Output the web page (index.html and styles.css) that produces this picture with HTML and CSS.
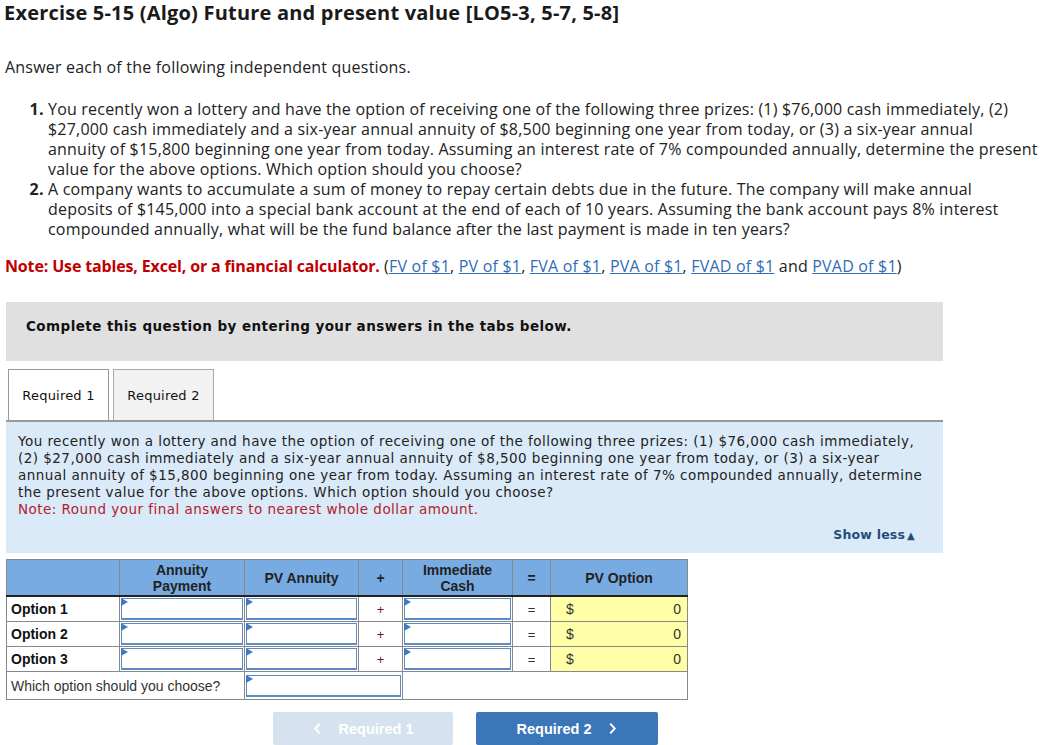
FILE: index.html
```html
<!DOCTYPE html>
<html>
<head>
<meta charset="utf-8">
<link rel="stylesheet" href="styles.css">
</head>
<body>
<h1 class="title">Exercise 5-15 (Algo) Future and present value [LO5-3, 5-7, 5-8]</h1>
<p class="intro">Answer each of the following independent questions.</p>
<ol class="questions">
  <li>You recently won a lottery and have the option of receiving one of the following three prizes: (1) $76,000 cash immediately, (2)<br>$27,000 cash immediately and a six-year annual annuity of $8,500 beginning one year from today, or (3) a six-year annual<br>annuity of $15,800 beginning one year from today. Assuming an interest rate of 7% compounded annually, determine the present<br>value for the above options. Which option should you choose?</li>
  <li>A company wants to accumulate a sum of money to repay certain debts due in the future. The company will make annual<br>deposits of $145,000 into a special bank account at the end of each of 10 years. Assuming the bank account pays 8% interest<br>compounded annually, what will be the fund balance after the last payment is made in ten years?</li>
</ol>
<p class="note"><span class="note-red">Note: Use tables, Excel, or a financial calculator.</span> (<a>FV of $1</a>, <a>PV of $1</a>, <a>FVA of $1</a>, <a>PVA of $1</a>, <a>FVAD of $1</a> and <a>PVAD of $1</a>)</p>

<div class="banner">Complete this question by entering your answers in the tabs below.</div>

<div class="tabs">
  <div class="tab active">Required 1</div>
  <div class="tab">Required 2</div>
</div>
<div class="tab-panel">
  <p class="panel-text">You recently won a lottery and have the option of receiving one of the following three prizes: (1) $76,000 cash immediately, (2) $27,000 cash immediately and a six-year annual annuity of $8,500 beginning one year from today, or (3) a six-year annual annuity of $15,800 beginning one year from today. Assuming an interest rate of 7% compounded annually, determine the present value for the above options. Which option should you choose?</p>
  <p class="panel-note">Note: Round your final answers to nearest whole dollar amount.</p>
  <div class="show-less">Show less<span class="tri">&#9650;</span></div>
</div>

<table class="answers">
  <colgroup>
    <col class="c-label"><col class="c-ap"><col class="c-pva"><col class="c-plus"><col class="c-cash"><col class="c-eq"><col class="c-pvo">
  </colgroup>
  <thead>
    <tr>
      <th></th>
      <th>Annuity<br>Payment</th>
      <th>PV Annuity</th>
      <th>+</th>
      <th>Immediate<br>Cash</th>
      <th>=</th>
      <th>PV Option</th>
    </tr>
  </thead>
  <tbody>
    <tr>
      <td class="label">Option 1</td>
      <td class="inp"><div class="box"></div></td>
      <td class="inp"><div class="box"></div></td>
      <td class="sym plus">+</td>
      <td class="inp"><div class="box"></div></td>
      <td class="sym">=</td>
      <td class="pvo"><span>$</span><span>0</span></td>
    </tr>
    <tr>
      <td class="label">Option 2</td>
      <td class="inp"><div class="box"></div></td>
      <td class="inp"><div class="box"></div></td>
      <td class="sym plus">+</td>
      <td class="inp"><div class="box"></div></td>
      <td class="sym">=</td>
      <td class="pvo"><span>$</span><span>0</span></td>
    </tr>
    <tr>
      <td class="label">Option 3</td>
      <td class="inp"><div class="box"></div></td>
      <td class="inp"><div class="box"></div></td>
      <td class="sym plus">+</td>
      <td class="inp"><div class="box"></div></td>
      <td class="sym">=</td>
      <td class="pvo"><span>$</span><span>0</span></td>
    </tr>
    <tr class="last">
      <td class="which" colspan="2">Which option should you choose?</td>
      <td class="inp" colspan="2"><div class="box"></div></td>
      <td colspan="3"></td>
    </tr>
  </tbody>
</table>

<div class="nav">
  <div class="btn prev"><svg class="chev" viewBox="0 0 10 14" width="9" height="13"><path d="M7.5 1.5 L2.5 7 L7.5 12.5" fill="none" stroke="currentColor" stroke-width="2.2"/></svg>Required 1</div>
  <div class="btn next">Required 2<svg class="chev" viewBox="0 0 10 14" width="9" height="13"><path d="M2.5 1.5 L7.5 7 L2.5 12.5" fill="none" stroke="currentColor" stroke-width="2.2"/></svg></div>
</div>
</body>
</html>
```

FILE: styles.css
```css
body {
  margin: 0;
  padding: 0 4px;
  font-family: "Open Sans", "Liberation Sans", sans-serif;
  color: #222;
  width: 1045px;
}
.title {
  margin: 0;
  padding-top: 1px;
  font-size: 20px;
  font-weight: 700;
  line-height: 24px;
  letter-spacing: 0.2px;
  color: #1a1a1a;
}
.intro {
  margin: 32px 0 0 1px;
  font-size: 16px;
  line-height: 20px;
  letter-spacing: 0.2px;
}
.questions {
  margin: 22px 0 0 0;
  padding-left: 44px;
  font-size: 16px;
  line-height: 20px;
  letter-spacing: 0.2px;
  white-space: nowrap;
}
.questions li::marker {
  font-weight: 700;
}
.note {
  margin: 17px 0 0 1px;
  font-size: 16px;
  line-height: 20px;
  letter-spacing: 0.2px;
}
.note-red {
  color: #c00000;
  font-weight: 700;
  letter-spacing: -0.15px;
}
.note a {
  color: #2f6db5;
  text-decoration: underline;
}
.banner {
  margin: 26px 0 0 2px;
  width: 937px;
  height: 59px;
  box-sizing: border-box;
  padding: 16px 0 0 20px;
  background: #e0e0e0;
  font-family: "DejaVu Sans", Verdana, sans-serif;
  font-weight: 700;
  font-size: 13.5px;
  color: #111;
  letter-spacing: 0.43px;
}
.tabs {
  display: flex;
  gap: 4px;
  margin: 8px 0 0 4px;
}
.tab {
  width: 101px;
  height: 51px;
  box-sizing: border-box;
  border: 1px solid #aaa;
  border-bottom: none;
  background: #f2f2f2;
  font-family: "DejaVu Sans", Verdana, sans-serif;
  font-size: 13px;
  letter-spacing: 0.2px;
  display: flex;
  align-items: center;
  justify-content: center;
  color: #111;
}
.tab.active {
  background: #fff;
  border-color: #999;
}
.tab-panel {
  margin-left: 2px;
  width: 937px;
  height: 133px;
  box-sizing: border-box;
  border-top: 2px solid #999;
  background: #dbeaf8;
  padding: 11px 16px 0 12px;
  font-family: "DejaVu Sans", Verdana, sans-serif;
  font-size: 13.5px;
  line-height: 17px;
  letter-spacing: 0.46px;
  position: relative;
}
.panel-text {
  margin: 0;
  color: #222;
}
.panel-note {
  margin: 0;
  color: #b0222a;
}
.show-less {
  position: absolute;
  right: 28px;
  bottom: 9px;
  font-weight: 700;
  font-size: 12.5px;
  letter-spacing: 0.2px;
  color: #1f4e79;
}
.tri {
  font-size: 10px;
  margin-left: 2px;
}
.answers {
  margin: 6px 0 0 2px;
  border-collapse: collapse;
  font-family: "Liberation Sans", Arial, sans-serif;
  font-size: 14px;
  table-layout: fixed;
  width: 681px;
}
.c-label { width: 113px; }
.c-ap { width: 125px; }
.c-pva { width: 114px; }
.c-plus { width: 44px; }
.c-cash { width: 110px; }
.c-eq { width: 38px; }
.c-pvo { width: 137px; }
.answers th {
  background: #77abe2;
  border: 1px solid #888;
  border-bottom: 2px solid #222;
  height: 35px;
  padding: 0;
  font-weight: 700;
  color: #222;
  line-height: 16px;
}
.answers td {
  border: 1px solid #888;
  padding: 0;
}
.answers td.label {
  font-weight: 700;
  padding-left: 4px;
  color: #111;
}
.answers td.inp {
  padding: 1px;
}
.box {
  height: 19px;
  background: #fff;
  border: 1px solid #5d8bc4;
  border-bottom-width: 2px;
  position: relative;
}
.box::before {
  content: "";
  position: absolute;
  left: -1px;
  top: -1px;
  border-left: 7px solid #3f79c1;
  border-top: 4px solid transparent;
  border-bottom: 4px solid transparent;
}
.answers td.sym {
  text-align: center;
  color: #333;
  background: #fff;
  font-size: 13px;
}
.answers td.plus {
  color: #7a1030;
}
.answers td.pvo {
  background: #ffffa8;
  color: #333;
  padding: 0 6px 0 15px;
}
.pvo span:first-child {
  float: left;
}
.pvo span:last-child {
  float: right;
}
.answers tr.last td {
  height: 25px;
}
.answers td.which {
  padding-left: 4px;
  color: #333;
}
.nav {
  display: flex;
  gap: 23px;
  margin: 12px 0 0 269px;
}
.btn {
  width: 180px;
  height: 33px;
  display: flex;
  align-items: center;
  justify-content: center;
  font-family: "Liberation Sans", Arial, sans-serif;
  font-weight: 700;
  font-size: 14.5px;
  color: #fff;
  border-radius: 2px;
  box-sizing: border-box;
}
.btn.prev {
  background: #d6e2f0;
}
.btn.next {
  width: 182px;
  background: #3b76b9;
}
.prev .chev { margin-right: 17px; }
.next .chev { margin-left: 17px; }
```
